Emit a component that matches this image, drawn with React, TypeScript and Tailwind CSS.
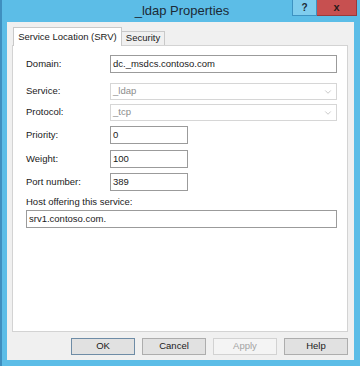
import { ChevronDown } from 'lucide-react';

function TextRow({ label, value, width }: { label: string; value: string; width: string }) {
    return (
        <div className="flex items-center">
            <span className="w-[84px] shrink-0">{label}</span>
            <div className={`${width} h-[18px] border border-[#9b9b9b] bg-white flex items-center px-[2px]`}>{value}</div>
        </div>
    );
}

function SelectRow({ label, value }: { label: string; value: string }) {
    return (
        <div className="flex items-center">
            <span className="w-[84px] shrink-0">{label}</span>
            <div className="flex-1 h-[17px] border border-[#d6d6d6] bg-white flex items-center justify-between pl-[2px] pr-[3px] text-[#8c8c8c]">
                <span>{value}</span>
                <ChevronDown size={10} strokeWidth={1.5} className="text-[#a8a8a8]" />
            </div>
        </div>
    );
}

export default function App() {
    return (
        <main className="w-[360px] h-[366px] bg-[#5cbde7] border-l-2 border-[#3f8fbf] flex flex-col overflow-hidden text-[9.5px] text-[#1a1a1a] font-['Liberation_Sans',Arial,sans-serif]">
            {/* title bar */}
            <div className="h-[22px] shrink-0 flex items-start">
                <div className="flex-1 h-full flex items-center justify-center pl-[70px] text-[13px] text-[#1b2a36]">
                    _ldap Properties
                </div>
                <div className="flex mr-[3px]">
                    <div className="w-[25px] h-[16px] bg-[#7fcdee] border border-[#3d93c2] border-t-0 flex items-center justify-center text-[10px] font-bold text-[#1d2b36]">?</div>
                    <div className="w-[40px] h-[16px] bg-[#c75050] border border-[#9a3a3a] border-t-0 border-l-0 flex items-center justify-center text-[11px] font-bold text-[#2a1a1a]">x</div>
                </div>
            </div>

            {/* dialog body */}
            <div className="h-[338px] shrink-0 ml-[5px] mr-[6px] bg-[#f0f0f0] pt-[5px] pl-[5px] pr-[6px] flex flex-col">
                <div className="flex items-end h-[18px] pl-[1px]">
                    <div className="relative z-10 w-[109px] h-[19px] -mb-px bg-white border border-b-0 border-[#c9c9c9] flex items-center justify-center">
                        Service Location (SRV)
                    </div>
                    <div className="w-[43px] h-[14px] bg-[#f0f0f0] border border-b-0 border-l-0 border-[#c9c9c9] flex items-center justify-center">
                        Security
                    </div>
                </div>

                <div className="h-[287px] border border-[#d3d3d3] bg-white pt-[9px] pl-[13px] pr-[10px] flex flex-col">
                    <TextRow label="Domain:" value="dc._msdcs.contoso.com" width="flex-1" />
                    <div className="mt-[10px]">
                        <SelectRow label="Service:" value="_ldap" />
                    </div>
                    <div className="mt-[4px]">
                        <SelectRow label="Protocol:" value="_tcp" />
                    </div>
                    <div className="mt-[5px]">
                        <TextRow label="Priority:" value="0" width="w-[78px]" />
                    </div>
                    <div className="mt-[6px]">
                        <TextRow label="Weight:" value="100" width="w-[78px]" />
                    </div>
                    <div className="mt-[5px]">
                        <TextRow label="Port number:" value="389" width="w-[78px]" />
                    </div>
                    <div className="mt-[5px] leading-[12px]">Host offering this service:</div>
                    <div className="mt-[2px] h-[18px] border border-[#9b9b9b] flex items-center px-[2px]">srv1.contoso.com.</div>
                </div>

                <div className="mt-[6px] flex justify-end gap-[7px]">
                    <button className="w-[64px] h-[17px] bg-[#e1e1e1] border border-[#6e8ca6] flex items-center justify-center">OK</button>
                    <button className="w-[64px] h-[17px] bg-[#e1e1e1] border border-[#adadad] flex items-center justify-center">Cancel</button>
                    <button className="w-[64px] h-[17px] bg-[#f4f4f4] border border-[#d2d2d2] text-[#a3a3a3] flex items-center justify-center" disabled>Apply</button>
                    <button className="w-[64px] h-[17px] bg-[#e1e1e1] border border-[#adadad] flex items-center justify-center">Help</button>
                </div>
            </div>
        </main>
    );
}
